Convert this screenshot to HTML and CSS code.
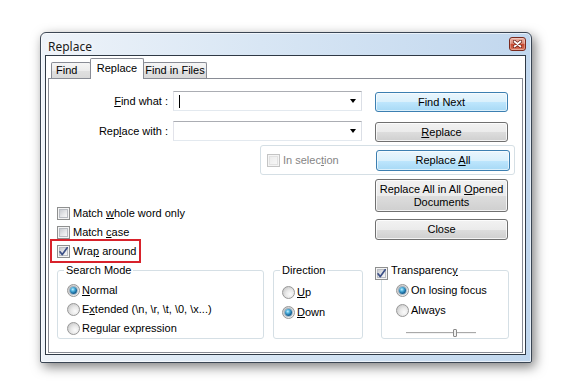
FILE: index.html
```html
<!DOCTYPE html>
<html lang="en">
<head>
<meta charset="utf-8">
<title>Replace</title>
<link rel="stylesheet" href="styles.css">
</head>
<body>
<div class="desk">
  <div class="window">
    <div class="titlebar">
      <span class="title">Replace</span>
      <span class="close-btn">
        <svg width="9" height="8" viewBox="0 0 9 8">
          <path d="M1.5 1.5 L7.5 6.5 M7.5 1.5 L1.5 6.5" stroke="#6b1f14" stroke-width="3.2" stroke-linecap="round"/>
          <path d="M1.5 1.5 L7.5 6.5 M7.5 1.5 L1.5 6.5" stroke="#fff" stroke-width="1.7" stroke-linecap="round"/>
        </svg>
      </span>
    </div>
    <div class="client">
      <div class="tabs">
        <div class="tab tab-find">Find</div>
        <div class="tab tab-replace active">Replace</div>
        <div class="tab tab-files">Find in Files</div>
      </div>
      <div class="pane">
        <div class="row row-a">
          <span class="lbl"><u>F</u>ind what :</span>
          <div class="combo"><span class="caret"></span><span class="arrow"></span></div>
          <button class="btn btn-default">Find Next</button>
        </div>
        <div class="row row-b">
          <span class="lbl">Rep<u>l</u>ace with :</span>
          <div class="combo"><span class="arrow"></span></div>
          <button class="btn"><u>R</u>eplace</button>
        </div>
        <div class="selbox">
          <span class="check disabled"><span class="box"></span><span class="txt">In selec<u>t</u>ion</span></span>
          <button class="btn btn-default btn-all">Replace <u>A</u>ll</button>
        </div>
        <div class="row-d">
          <div class="opts">
            <span class="check"><span class="box"></span><span class="txt">Match <u>w</u>hole word only</span></span>
            <span class="check"><span class="box"></span><span class="txt">Match <u>c</u>ase</span></span>
            <span class="check wrap"><span class="box"><svg width="11" height="11" viewBox="0 0 11 11"><path d="M2 5.8 L4.3 8.6 L9.2 1.8" fill="none" stroke="#3b4f86" stroke-width="1.7" stroke-linecap="round" stroke-linejoin="round"/></svg></span><span class="txt">Wra<u>p</u> around</span><span class="highlight"></span></span>
          </div>
          <div class="btns">
            <button class="btn btn-tall">Replace All in All <u>O</u>pened<br>Documents</button>
            <button class="btn">Close</button>
          </div>
        </div>
        <div class="groups">
          <fieldset class="grp grp-mode">
            <legend>Search Mode</legend>
            <div class="grp-body">
              <span class="radio"><span class="rad on"></span><span class="txt"><u>N</u>ormal</span></span>
              <span class="radio"><span class="rad"></span><span class="txt">E<u>x</u>tended (\n, \r, \t, \0, \x...)</span></span>
              <span class="radio"><span class="rad"></span><span class="txt">Re<u>g</u>ular expression</span></span>
            </div>
          </fieldset>
          <fieldset class="grp grp-dir">
            <legend>Direction</legend>
            <div class="grp-body">
              <span class="radio"><span class="rad"></span><span class="txt"><u>U</u>p</span></span>
              <span class="radio"><span class="rad on"></span><span class="txt"><u>D</u>own</span></span>
            </div>
          </fieldset>
          <fieldset class="grp grp-trans">
            <legend><span class="box"><svg width="11" height="11" viewBox="0 0 11 11"><path d="M2 5.8 L4.3 8.6 L9.2 1.8" fill="none" stroke="#3b4f86" stroke-width="1.7" stroke-linecap="round" stroke-linejoin="round"/></svg></span><span class="txt">Transparenc<u>y</u></span></legend>
            <div class="grp-body">
              <span class="radio"><span class="rad on"></span><span class="txt">On losing focus</span></span>
              <span class="radio"><span class="rad"></span><span class="txt">Always</span></span>
              <div class="slider">
                <span class="track track-l"></span>
                <span class="thumb"></span>
                <span class="track track-r"></span>
              </div>
            </div>
          </fieldset>
        </div>
      </div>
    </div>
  </div>
</div>
</body>
</html>
```
FILE: styles.css
```css
* { box-sizing: border-box; }
html, body { margin: 0; padding: 0; background: #fff; }
body {
  font-family: "Liberation Sans", Arial, sans-serif;
  font-size: 11px;
  line-height: 13px;
  color: #000;
}
u { text-underline-offset: 1px; }

.desk { padding: 32px 0 0 40px; height: 387px; }

.window {
  width: 492px;
  height: 331px;
  border: 1px solid #3a4553;
  border-radius: 6px 6px 2px 2px;
  background: linear-gradient(to right, #eef3f9 0%, #d8e6f4 45%, #c1d7ee 100%);
  box-shadow: inset 0 0 0 1px rgba(255,255,255,.6), 3px 4px 12px rgba(0,0,0,.5);
  display: flex;
  flex-direction: column;
  padding: 0 5px 7px 4px;
}

.titlebar {
  height: 22px;
  display: flex;
  align-items: center;
  padding: 4px 0 0 3px;
  flex: none;
}
.title {
  font-family: "Noto Sans", "Open Sans", sans-serif;
  font-size: 12px;
  color: #1a1a1a;
  text-shadow: 0 0 6px #fff, 0 0 10px #fff, 0 0 14px #fff;
}
.close-btn {
  margin-left: auto;
  align-self: flex-start;
  width: 17px;
  height: 14px;
  border: 1px solid #7a2a1e;
  border-radius: 3px;
  background: linear-gradient(#eab0a3 0%, #dc8b79 45%, #c6482f 52%, #cf5d45 80%, #e08a70 100%);
  box-shadow: inset 0 0 0 1px rgba(255,255,255,.3);
  display: flex;
  align-items: center;
  justify-content: center;
}
.close-btn svg { display: block; }

.client {
  height: 300px;
  border: 1px solid #2f3945;
  background: #fff;
  display: flex;
  flex-direction: column;
  flex: none;
}

.tabs {
  height: 22px;
  display: flex;
  align-items: flex-end;
  padding-left: 5px;
  flex: none;
}
.tab {
  height: 16px;
  border: 1px solid #898c95;
  border-bottom: none;
  border-radius: 2px 2px 0 0;
  background: linear-gradient(#f5f5f5 0%, #ececec 50%, #e0e0e0 51%, #d9d9d9 100%);
  line-height: 15px;
  text-align: center;
  white-space: nowrap;
}
.tab-find { width: 40px; text-align: left; padding-left: 4px; }
.tab-replace { width: 54px; margin-left: -1px; }
.tab-files { width: 64px; margin-left: -1px; }
.tab.active {
  height: 21px;
  background: #fff;
  margin-bottom: -1px;
  padding-bottom: 2px;
  line-height: 18px;
  position: relative;
  z-index: 1;
}

.pane {
  flex: 1;
  margin: 0 2px 1px 2px;
  border: 1px solid #898c95;
  background: #fff;
  display: flex;
  flex-direction: column;
}

.row { display: flex; align-items: flex-start; height: 21px; }
.row-a { margin-top: 12px; }
.row-b { margin-top: 9px; }
.lbl {
  width: 124px;
  text-align: right;
  padding-right: 5px;
  line-height: 20px;
  white-space: nowrap;
}
.combo {
  width: 189px;
  height: 20px;
  border: 1px solid;
  border-color: #abadb3 #dbdfe6 #e3e9ef #e2e3ea;
  background: #fff;
  display: flex;
  align-items: center;
}
.caret { width: 1px; height: 13px; background: #000; margin-left: 5px; }
.arrow {
  margin-left: auto;
  margin-right: 5px;
  width: 0; height: 0;
  border-top: 4px solid #000;
  border-left: 3.5px solid transparent;
  border-right: 3.5px solid transparent;
}

.btn {
  font: inherit;
  color: #000;
  margin: 0;
  padding: 0;
  width: 133px;
  height: 20px;
  border: 1px solid #707070;
  border-radius: 3px;
  background: linear-gradient(#f2f2f2 0%, #ebebeb 50%, #dddddd 51%, #cfcfcf 100%);
  box-shadow: inset 0 0 0 1px rgba(255,255,255,.75);
  text-align: center;
  line-height: 13px;
}
.btn-default {
  border-color: #3c7fb1;
  background: linear-gradient(#eaf6fd 0%, #d9f0fc 50%, #bee6fd 51%, #a7d9f5 100%);
  box-shadow: inset 0 0 0 1px rgba(255,255,255,.6);
}
.row .btn { margin: 1px 0 0 13px; }

.selbox {
  margin: 3px 0 0 211px;
  width: 255px;
  height: 30px;
  border: 1px solid #d5dfe5;
  border-radius: 3px;
  display: flex;
  align-items: center;
  justify-content: space-between;
  padding: 0 5px 0 6px;
}
.btn-all { width: 134px; height: 21px; margin-right: -1px; }

.check { display: flex; align-items: center; gap: 3px; height: 13px; white-space: nowrap; }
.txt { white-space: nowrap; }
.box {
  width: 13px;
  height: 13px;
  flex: none;
  border: 1px solid #8e8f8f;
  background: #f4f4f4;
  position: relative;
  display: flex;
  align-items: center;
  justify-content: center;
}
.box::before {
  content: "";
  position: absolute;
  inset: 1px;
  border: 1px solid #b9bcc2;
  background: linear-gradient(135deg, #c9ccd1 0%, #e6e7e9 55%, #f7f7f7 100%);
}
.box svg { position: relative; z-index: 1; display: block; }
.check.disabled { color: #858585; }
.check.disabled .box { border-color: #c4c4c4; }
.check.disabled .box::before { border-color: #e2e2e2; background: linear-gradient(135deg, #ececec, #f7f7f7); }

.row-d { display: flex; }
.opts {
  width: 326px;
  padding: 32px 0 0 8px;
  display: flex;
  flex-direction: column;
  gap: 6px;
}
.wrap { position: relative; align-self: flex-start; }
.highlight {
  position: absolute;
  left: -7px;
  top: -6px;
  width: 91px;
  height: 24px;
  border: 2px solid #d8222b;
}
.btns { display: flex; flex-direction: column; gap: 7px; padding-top: 4px; }
.btn-tall { height: 33px; }
.btns .btn:last-child { height: 21px; }

.groups { display: flex; margin-top: 6px; flex: none; }
.grp {
  margin: 0;
  padding: 0;
  min-width: 0;
  border: 1px solid #d5dfe5;
  border-radius: 3px;
}
.grp legend {
  padding: 0 2px;
  margin-left: 6px;
  line-height: 13px;
  white-space: nowrap;
}
.grp-body { display: flex; flex-direction: column; }
.grp-mode { margin-left: 8px; width: 207px; }
.grp-mode .grp-body { padding: 7px 0 3px 9px; gap: 6px; }
.grp-dir { margin-left: 9px; width: 90px; }
.grp-dir .grp-body { padding: 9px 0 0 8px; gap: 7px; }
.grp-trans { margin-left: 18px; width: 128px; }
.grp-trans legend {
  margin-left: -7px;
  padding: 0 2px 0 0;
  display: flex;
  align-items: flex-start;
  gap: 3px;
}
.grp-trans legend .box { margin-top: 3px; margin-bottom: -3px; }
.grp-trans .grp-body { padding: 7px 0 0 14px; gap: 7px; }

.radio { display: flex; align-items: center; gap: 2px; height: 13px; white-space: nowrap; }
.rad {
  width: 13px;
  height: 13px;
  flex: none;
  border-radius: 50%;
  border: 1px solid #989898;
  background: radial-gradient(circle at 65% 65%, #fbfbfb 0%, #e9e9e9 40%, #c8c8c8 85%);
  position: relative;
}
.rad.on::after {
  content: "";
  position: absolute;
  inset: 2px;
  border-radius: 50%;
  background: radial-gradient(circle at 40% 35%, #c4f0ff 0%, #53b5e0 28%, #17679b 62%, #0c3f68 100%);
  box-shadow: 0 0 0 1px rgba(40,90,130,.35);
}

.slider {
  margin: 5px 0 0 10px;
  height: 8px;
  display: flex;
  align-items: center;
}
.track { height: 2px; border-top: 1px solid #a9a9a9; border-bottom: 1px solid #f2f2f2; }
.track-l { width: 47px; }
.track-r { width: 19px; }
.thumb {
  width: 4px;
  height: 8px;
  border: 1px solid #8a8a8a;
  border-radius: 1px;
  background: #f0f0f0;
}
```
